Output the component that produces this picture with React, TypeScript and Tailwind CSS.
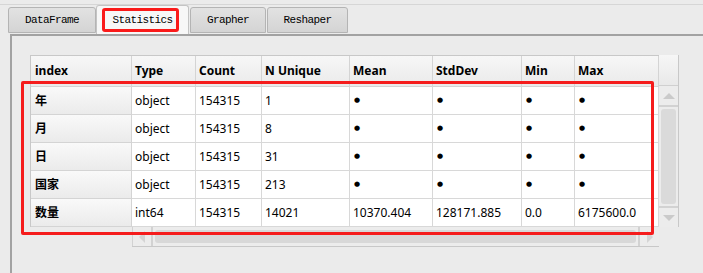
import { memo } from 'react';

const columns = [
  { key: 'type', label: 'Type', w: 'w-[64px]' },
  { key: 'count', label: 'Count', w: 'w-[66px]' },
  { key: 'nunique', label: 'N Unique', w: 'w-[88px]' },
  { key: 'mean', label: 'Mean', w: 'w-[83px]' },
  { key: 'std', label: 'StdDev', w: 'w-[89px]' },
  { key: 'min', label: 'Min', w: 'w-[53px]' },
  { key: 'max', label: 'Max', w: 'w-[84px]' },
];

const DOT = '●';

const rows = [
  { index: '年', type: 'object', count: '154315', nunique: '1', mean: DOT, std: DOT, min: DOT, max: DOT },
  { index: '月', type: 'object', count: '154315', nunique: '8', mean: DOT, std: DOT, min: DOT, max: DOT },
  { index: '日', type: 'object', count: '154315', nunique: '31', mean: DOT, std: DOT, min: DOT, max: DOT },
  { index: '国家', type: 'object', count: '154315', nunique: '213', mean: DOT, std: DOT, min: DOT, max: DOT },
  { index: '数量', type: 'int64', count: '154315', nunique: '14021', mean: '10370.404', std: '128171.885', min: '0.0', max: '6175600.0' },
];

const tabs = ['DataFrame', 'Statistics', 'Grapher', 'Reshaper'];

const Tabs = () => (
  <div className="flex items-end h-[29px] pl-[8px]">
    {tabs.map((t) => {
      const active = t === 'Statistics';
      return (
        <div
          key={t}
          className={
            active
              ? 'h-[29px] w-[93px] flex items-center justify-center bg-[#f7f7f7] border border-b-0 border-[#c4c4c4] rounded-t-[3px] text-black'
              : 'h-[26px] mb-px flex items-center justify-center bg-gradient-to-b from-[#e2e2e2] to-[#d4d4d4] border border-[#b4b4b4] rounded-t-[3px] text-black'
          }
          style={
            active
              ? undefined
              : { width: t === 'DataFrame' ? 88 : t === 'Grapher' ? 76 : 81, marginLeft: t === 'Grapher' || t === 'Reshaper' ? 1 : 0 }
          }
        >
          <span className="font-['Liberation_Mono',monospace] text-[11px] tracking-[-0.6px] pt-[1px]">{t}</span>
        </div>
      );
    })}
  </div>
);

const VScroll = () => (
  <div className="w-[20px] flex flex-col border-r border-[#c8c8c8]">
    <div className="h-[31px] border-b border-[#d0d0d0] bg-gradient-to-b from-[#f6f6f6] to-[#e9e9e9]" />
    <div className="flex-1 flex flex-col bg-[#ececec]">
      <div className="h-[21px] flex items-center justify-center border-b-2 border-[#d2d2d2]">
        <svg width="12" height="6" viewBox="0 0 12 6">
          <path d="M0 6 L6 0 L12 6 Z" fill="#cacaca" />
        </svg>
      </div>
      <div className="flex-1 px-[2px] py-[2px]">
        <div className="h-full rounded-[3px] bg-[#dadada]" />
      </div>
      <div className="h-[21px] flex items-center justify-center border-t-2 border-[#d2d2d2]">
        <svg width="12" height="6" viewBox="0 0 12 6">
          <path d="M0 0 L12 0 L6 6 Z" fill="#cacaca" />
        </svg>
      </div>
    </div>
  </div>
);

const HScroll = () => (
  <div className="ml-[102px] w-[527px] h-[20px] flex bg-[#ececec] border-b border-[#c8c8c8]">
    <div className="w-[21px] flex items-center justify-center border-l border-r-2 border-[#d2d2d2]">
      <svg width="6" height="12" viewBox="0 0 6 12">
        <path d="M6 0 L6 12 L0 6 Z" fill="#d4d4d4" />
      </svg>
    </div>
    <div className="flex-1 py-[3px] px-[2px]">
      <div className="h-full rounded-[3px] bg-[#d8d8d8]" />
    </div>
    <div className="w-[21px] flex items-center justify-center border-l-2 border-[#d2d2d2]">
      <svg width="6" height="12" viewBox="0 0 6 12">
        <path d="M0 0 L6 6 L0 12 Z" fill="#d4d4d4" />
      </svg>
    </div>
  </div>
);

const StatsTable = () => (
  <div className="flex flex-col font-['Noto_Sans','Noto_Sans_CJK_SC',sans-serif] text-[12px] text-black">
    <div className="flex">
      <div className="w-[629px] border-l border-t border-[#c8c8c8] bg-white">
        {/* header */}
        <div className="flex h-[31px]">
          <div className="w-[101px] h-full border-r border-b border-[#d4d4d4] bg-gradient-to-b from-[#f7f7f7] to-[#eaeaea] flex items-center pl-[4px] font-bold">
            index
          </div>
          {columns.map((c) => (
            <div
              key={c.key}
              className={`${c.w} h-full border-r border-b border-[#d4d4d4] bg-gradient-to-b from-[#f7f7f7] to-[#eaeaea] flex items-center pl-[3px] font-bold`}
            >
              {c.label}
            </div>
          ))}
        </div>
        {/* body */}
        {rows.map((r) => (
          <div key={r.index} className="flex h-[28px]">
            <div className="w-[101px] h-full border-r border-b border-[#d4d4d4] bg-gradient-to-b from-[#f9f9f9] to-[#ebebeb] flex items-center pl-[4px] font-bold">
              {r.index}
            </div>
            {columns.map((c) => {
              const v = (r as Record<string, string>)[c.key];
              return (
                <div
                  key={c.key}
                  className={`${c.w} h-full border-r border-b border-[#d8d8d8] flex items-center pl-[3px]`}
                >
                  {v === DOT ? (
                    <span className="font-['DejaVu_Sans',sans-serif] text-[7px] leading-none pl-[1px]">{DOT}</span>
                  ) : (
                    v
                  )}
                </div>
              );
            })}
          </div>
        ))}
      </div>
      <VScroll />
    </div>
    <HScroll />
  </div>
);

const App = () => {
  return (
    <div className="relative w-[703px] h-[273px] bg-[#ebebeb] overflow-hidden flex flex-col">
      <div className="h-[4px] shrink-0" />
      <div className="h-px bg-[#d6d6d6] shrink-0" />
      <Tabs />
      {/* pane */}
      <div className="ml-[10px] flex-1 border-t-2 border-l-2 border-[#a2a2a2] pt-[19px] pl-[18px]">
        <StatsTable />
      </div>

      {/* red highlight marks */}
      <div className="absolute left-[102px] top-[8px] w-[77px] h-[24px] border-[3px] border-[#fa1a1a] rounded-[3px]" />
      <div className="absolute left-[21px] top-[81px] w-[633px] h-[154px] border-[3px] border-[#f51c1c] rounded-[2px]" />
    </div>
  );
};

export default memo(App);
